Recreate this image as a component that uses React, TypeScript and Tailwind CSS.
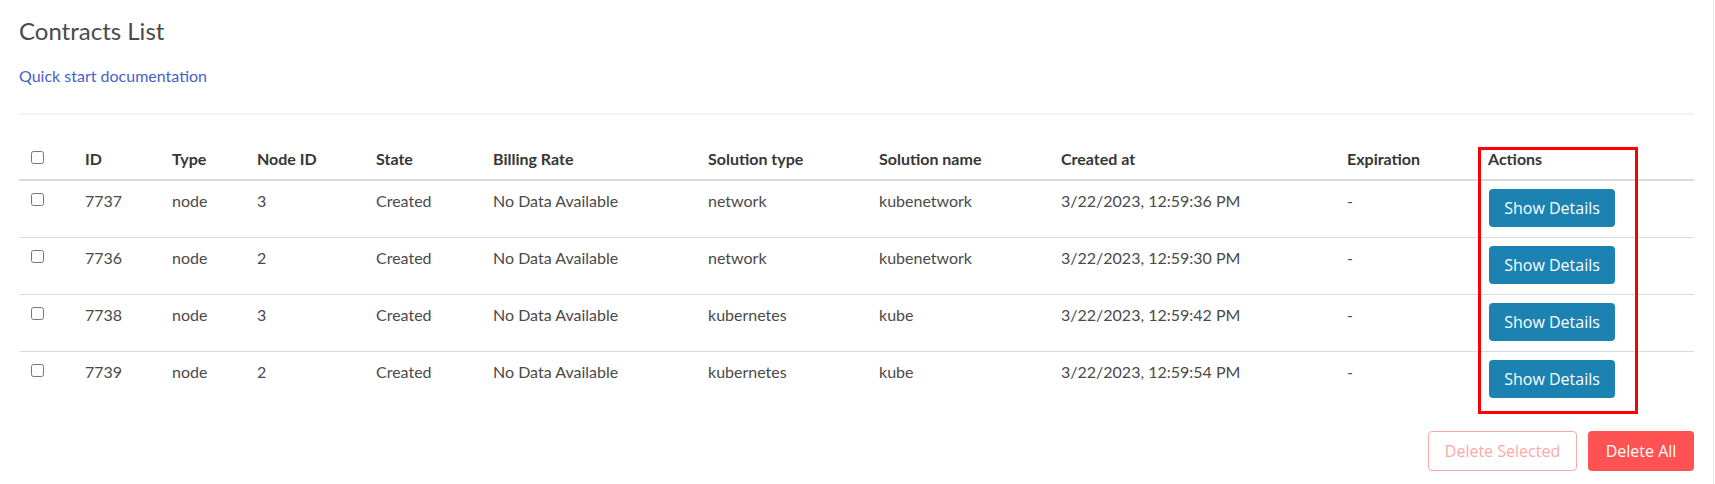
import React from "react";

type Contract = {
  id: number;
  type: string;
  nodeId: number;
  state: string;
  billingRate: string;
  solutionType: string;
  solutionName: string;
  createdAt: string;
  expiration: string;
};

const contracts: Contract[] = [
  {
    id: 7737,
    type: "node",
    nodeId: 3,
    state: "Created",
    billingRate: "No Data Available",
    solutionType: "network",
    solutionName: "kubenetwork",
    createdAt: "3/22/2023, 12:59:36 PM",
    expiration: "-",
  },
  {
    id: 7736,
    type: "node",
    nodeId: 2,
    state: "Created",
    billingRate: "No Data Available",
    solutionType: "network",
    solutionName: "kubenetwork",
    createdAt: "3/22/2023, 12:59:30 PM",
    expiration: "-",
  },
  {
    id: 7738,
    type: "node",
    nodeId: 3,
    state: "Created",
    billingRate: "No Data Available",
    solutionType: "kubernetes",
    solutionName: "kube",
    createdAt: "3/22/2023, 12:59:42 PM",
    expiration: "-",
  },
  {
    id: 7739,
    type: "node",
    nodeId: 2,
    state: "Created",
    billingRate: "No Data Available",
    solutionType: "kubernetes",
    solutionName: "kube",
    createdAt: "3/22/2023, 12:59:54 PM",
    expiration: "-",
  },
];

const headers = [
  "ID",
  "Type",
  "Node ID",
  "State",
  "Billing Rate",
  "Solution type",
  "Solution name",
  "Created at",
  "Expiration",
  "Actions",
];

const widths = [54, 87, 85, 119, 117, 215, 171, 182, 286, 141, 218];

const btnFont = { fontFamily: '"Open Sans", "Noto Sans", sans-serif' };

export default function App() {
  return (
    <div
      className="relative w-[1714px] min-h-[484px] border-r border-[#e8e8e8] bg-white text-[#4a4a4a]"
      style={{ fontFamily: 'Lato, "Liberation Sans", sans-serif' }}
    >
      <div className="w-[1675px] ml-[19px] pt-[13px]">
        <h1 className="text-[24px] leading-[36px] font-normal text-[#4a4a4a]">
          Contracts List
        </h1>
        <a
          href="#"
          className="block mt-[15px] text-[16px] leading-[24px] text-[#485fc7] w-fit"
        >
          Quick start documentation
        </a>
        <div className="mt-[25px] h-[2px] bg-[#f3f3f3]" />

        <table className="mt-[24px] table-fixed w-[1675px] border-collapse text-[16px] leading-[24px]">
          <colgroup>
            {widths.map((w, i) => (
              <col key={i} style={{ width: w }} />
            ))}
          </colgroup>
          <thead>
            <tr className="border-b-2 border-[#dbdbdb]">
              <th className="px-3 py-2 text-left align-top">
                <input type="checkbox" className="block mt-1 w-[13px] h-[13px]" />
              </th>
              {headers.map((h) => (
                <th
                  key={h}
                  className="px-3 py-2 text-left align-top font-bold text-[#363636]"
                >
                  {h}
                </th>
              ))}
            </tr>
          </thead>
          <tbody>
            {contracts.map((c, i) => (
              <tr
                key={c.id}
                className={
                  i < contracts.length - 1 ? "border-b border-[#dbdbdb]" : ""
                }
              >
                <td className="px-3 pt-2 pb-[10px] align-top">
                  <input type="checkbox" className="block mt-1 w-[13px] h-[13px]" />
                </td>
                <td className="px-3 pt-2 align-top">{c.id}</td>
                <td className="px-3 pt-2 align-top">{c.type}</td>
                <td className="px-3 pt-2 align-top">{c.nodeId}</td>
                <td className="px-3 pt-2 align-top">{c.state}</td>
                <td className="px-3 pt-2 align-top">{c.billingRate}</td>
                <td className="px-3 pt-2 align-top">{c.solutionType}</td>
                <td className="px-3 pt-2 align-top">{c.solutionName}</td>
                <td className="px-3 pt-2 align-top">{c.createdAt}</td>
                <td className="px-3 pt-2 align-top">{c.expiration}</td>
                <td className="pl-[13px] pt-2 pb-[10px] align-top">
                  <button
                    className="flex items-center justify-center w-[126px] h-[38px] rounded-[4px] bg-[#1b82b1] text-white text-[16px]"
                    style={btnFont}
                  >
                    Show Details
                  </button>
                </td>
              </tr>
            ))}
          </tbody>
        </table>

        <div className="mt-[23px] flex justify-end gap-[11px]">
          <button
            disabled
            className="flex items-center justify-center w-[149px] h-10 rounded-[4px] border border-[#ffa8a8] bg-white text-[#ffa8a8] text-[16px]"
            style={btnFont}
          >
            Delete Selected
          </button>
          <button
            className="flex items-center justify-center w-[106px] h-10 rounded-[4px] bg-[#ff5252] text-white text-[16px]"
            style={btnFont}
          >
            Delete All
          </button>
        </div>
      </div>

      {/* highlight around the actions column */}
      <div className="absolute left-[1478px] top-[147px] w-[160px] h-[267px] border-[3px] border-[#ff0000] pointer-events-none" />
    </div>
  );
}
